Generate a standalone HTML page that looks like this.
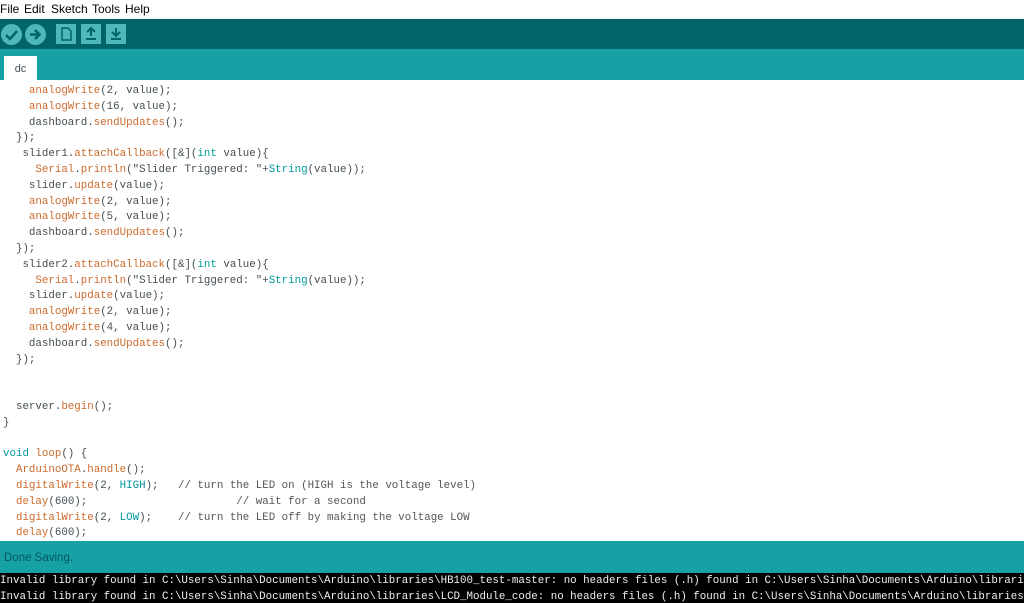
<!DOCTYPE html>
<html><head><meta charset="utf-8"><style>
*{margin:0;padding:0;box-sizing:border-box}
body{width:1024px;height:603px;overflow:hidden;background:#fff;font-family:"Liberation Sans",sans-serif;position:relative}
#menu{position:absolute;top:0;left:0;width:1024px;height:19px;background:#fff;font-size:12px;color:#000}
#menu span{position:absolute;top:2px}
#tb{position:absolute;top:19px;left:0;width:1024px;height:30px;background:#006468}
.c{position:absolute;top:5px;width:21px;height:21px;border-radius:50%;background:#4db7bb}
.s{position:absolute;top:5px;width:20px;height:20px;background:#4db7bb}
#tabs{position:absolute;top:49px;left:0;width:1024px;height:31px;background:#17a1a5}
#tab{position:absolute;left:4px;top:7px;width:33px;height:24px;background:#fff;font-size:11px;color:#434f54;text-align:center;line-height:26px}
#ed{position:absolute;top:80px;left:0;width:1024px;height:461px;background:#fff;overflow:hidden}
pre{position:absolute;left:3px;font-family:"Liberation Mono",monospace;font-size:10.8px;line-height:15.8px;color:#434f54}
.o{color:#cc6a2c}.t{color:#00979c}.g{color:#555}
#st{position:absolute;top:541px;left:0;width:1024px;height:32px;background:#17a1a5;color:#00585c;font-size:11.5px;padding:11px 0 0 4px}
#con{position:absolute;top:573px;left:0;width:1024px;height:30px;background:#000;overflow:hidden}
#con pre{left:0;top:0;color:#eee;line-height:16px;white-space:pre}
</style></head><body>
<div id="menu"><span style="left:0">File</span><span style="left:24px">Edit</span><span style="left:51px">Sketch</span><span style="left:92px">Tools</span><span style="left:125px">Help</span></div>
<div id="tb">
<div class="c" style="left:1px"><svg width="21" height="21"><path d="M5 11l4 4 7-8" stroke="#006468" stroke-width="2.5" fill="none"/></svg></div>
<div class="c" style="left:25px"><svg width="21" height="21"><path d="M5 10.5h9M10 6l4.5 4.5L10 15" stroke="#006468" stroke-width="2.5" fill="none"/></svg></div>
<div class="s" style="left:56px"><svg width="20" height="20"><path d="M6 4h6l3 3v9H6z" stroke="#006468" stroke-width="1.5" fill="none"/></svg></div>
<div class="s" style="left:81px"><svg width="20" height="20"><path d="M10 4v8M6 8l4-4 4 4M5 15h10" stroke="#006468" stroke-width="2" fill="none"/></svg></div>
<div class="s" style="left:106px"><svg width="20" height="20"><path d="M10 4v8M6 8l4 4 4-4M5 15h10" stroke="#006468" stroke-width="2" fill="none"/></svg></div>
</div>
<div id="tabs"><div id="tab">dc</div></div>
<div id="ed"><pre style="top:4px">    <span class="o">analogWrite</span>(2, value);
    <span class="o">analogWrite</span>(16, value);
    dashboard.<span class="o">sendUpdates</span>();
  });
   slider1.<span class="o">attachCallback</span>([&amp;](<span class="t">int</span> value){
     <span class="o">Serial</span>.<span class="o">println</span>("Slider Triggered: "+<span class="t">String</span>(value));
    slider.<span class="o">update</span>(value);
    <span class="o">analogWrite</span>(2, value);
    <span class="o">analogWrite</span>(5, value);
    dashboard.<span class="o">sendUpdates</span>();
  });
   slider2.<span class="o">attachCallback</span>([&amp;](<span class="t">int</span> value){
     <span class="o">Serial</span>.<span class="o">println</span>("Slider Triggered: "+<span class="t">String</span>(value));
    slider.<span class="o">update</span>(value);
    <span class="o">analogWrite</span>(2, value);
    <span class="o">analogWrite</span>(4, value);
    dashboard.<span class="o">sendUpdates</span>();
  });


  server.<span class="o">begin</span>();
}

<span class="t">void</span> <span class="o">loop</span>() {
  <span class="o">ArduinoOTA</span>.<span class="o">handle</span>();
  <span class="o">digitalWrite</span>(2, <span class="t">HIGH</span>);   <span class="g">// turn the LED on (HIGH is the voltage level)</span>
  <span class="o">delay</span>(600);                       <span class="g">// wait for a second</span>
  <span class="o">digitalWrite</span>(2, <span class="t">LOW</span>);    <span class="g">// turn the LED off by making the voltage LOW</span>
  <span class="o">delay</span>(600);</pre></div>
<div id="st">Done Saving.</div>
<div id="con"><pre>Invalid library found in C:\Users\Sinha\Documents\Arduino\libraries\HB100_test-master: no headers files (.h) found in C:\Users\Sinha\Documents\Arduino\libraries\HB100_test-master
Invalid library found in C:\Users\Sinha\Documents\Arduino\libraries\LCD_Module_code: no headers files (.h) found in C:\Users\Sinha\Documents\Arduino\libraries\LCD_Module_code</pre></div>
</body></html>
